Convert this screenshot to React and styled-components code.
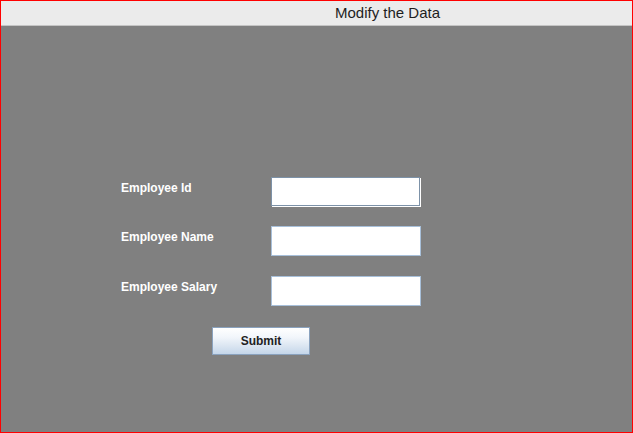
import React from "react";
import styled, { createGlobalStyle } from "styled-components";

const Global = createGlobalStyle`
  html, body { margin: 0; padding: 0; background: #808080; }
  * { box-sizing: border-box; }
`;

const Frame = styled.div`
  width: 633px;
  height: 433px;
  border: 1px solid #ff0000;
  background: #808080;
  display: flex;
  flex-direction: column;
`;

const TitleBar = styled.div`
  height: 25px;
  flex: none;
  background: #ebebeb;
  border-bottom: 1px solid #c4c4c4;
  display: flex;
  align-items: center;
  justify-content: center;
  padding: 0 0 1px 142px;
  font-family: "Liberation Sans", Arial, sans-serif;
  font-size: 15px;
  color: #1e1e1e;
`;

const Body = styled.div`
  flex: 1;
  padding: 151px 0 0 120px;
  display: flex;
  flex-direction: column;
`;

const Form = styled.div`
  display: grid;
  grid-template-columns: 150px 150px;
  row-gap: 20px;
`;

const Label = styled.label`
  align-self: center;
  padding-bottom: 8px;
  font-family: "Liberation Sans", Arial, sans-serif;
  font-weight: bold;
  font-size: 12px;
  line-height: 14px;
  color: #ffffff;
`;

const Field = styled.input`
  width: ${(p) => (p.$focused ? "149px" : "150px")};
  height: ${(p) => (p.$focused ? "29px" : "30px")};
  margin: 0;
  padding: 0 4px;
  background: #ffffff;
  border: 1px solid ${(p) => (p.$focused ? "#7d92a8" : "#a8c0da")};
  box-shadow: ${(p) => (p.$focused ? "1px 1px 0 #ffffff" : "none")};
  outline: none;
  font-family: "Liberation Sans", Arial, sans-serif;
  font-size: 12px;
`;

const ButtonRow = styled.div`
  padding: 21px 0 0 91px;
`;

const Button = styled.button`
  width: 98px;
  height: 28px;
  margin: 0;
  border: 1px solid #8aa2be;
  background: linear-gradient(#ffffff 0%, #f2f6fb 35%, #dae5f1 70%, #c4d6ea 100%);
  font-family: "Liberation Sans", Arial, sans-serif;
  font-weight: bold;
  font-size: 12px;
  color: #222222;
  padding: 0;
`;

export default function App() {
  return (
    <>
      <Global />
      <Frame>
        <TitleBar>Modify the Data</TitleBar>
        <Body>
          <Form>
            <Label>Employee Id</Label>
            <Field $focused />
            <Label>Employee Name</Label>
            <Field />
            <Label>Employee Salary</Label>
            <Field />
          </Form>
          <ButtonRow>
            <Button>Submit</Button>
          </ButtonRow>
        </Body>
      </Frame>
    </>
  );
}
